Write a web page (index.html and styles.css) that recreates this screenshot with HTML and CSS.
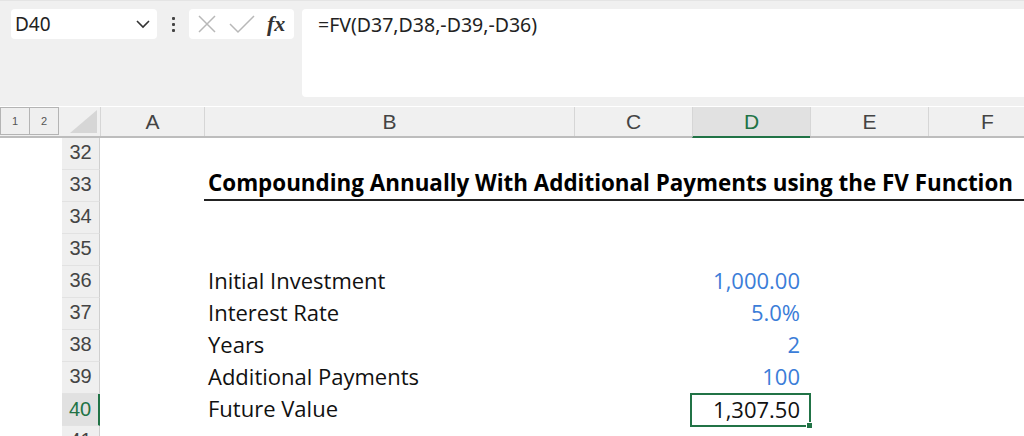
FILE: index.html
```html
<!DOCTYPE html>
<html>
<head>
<meta charset="utf-8">
<link rel="stylesheet" href="styles.css">
</head>
<body>
<div class="toolbar">
  <div class="namebox">
    <span class="name">D40</span>
    <svg class="chev" width="16" height="10" viewBox="0 0 16 10"><path d="M2 2 L8 8 L14 2" fill="none" stroke="#333" stroke-width="1.6"/></svg>
  </div>
  <div class="dots"><span></span><span></span><span></span></div>
  <div class="fxbox">
    <svg class="ico" width="20" height="20" viewBox="0 0 20 20"><path d="M2 2 L18 18 M18 2 L2 18" stroke="#b8b8b8" stroke-width="1.5" fill="none"/></svg>
    <svg class="ico" width="26" height="20" viewBox="0 0 26 20"><path d="M1 10 L9 18 L25 2" stroke="#b8b8b8" stroke-width="1.5" fill="none"/></svg>
    <span class="fx">fx</span>
  </div>
  <div class="formula">=FV(D37,D38,-D39,-D36)</div>
</div>
<div class="sheet">
  <div class="hdr">
    <div class="outline"><span class="obtn">1</span><span class="obtn">2</span></div>
    <div class="corner"><svg width="38" height="29" viewBox="0 0 38 29"><polygon points="35,3 35,26 8,26" fill="#d6d6d6"/></svg></div>
    <div class="col">A</div>
    <div class="col">B</div>
    <div class="col">C</div>
    <div class="col sel">D</div>
    <div class="col">E</div>
    <div class="col last">F</div>
  </div>
  <div class="row"><div class="gut"></div><div class="rh">32</div><div class="cells"></div></div>
  <div class="row"><div class="gut"></div><div class="rh">33</div><div class="cells"><div class="ca"></div><div class="title">Compounding Annually With Additional Payments using the FV Function</div></div></div>
  <div class="row"><div class="gut"></div><div class="rh">34</div><div class="cells"></div></div>
  <div class="row"><div class="gut"></div><div class="rh">35</div><div class="cells"></div></div>
  <div class="row"><div class="gut"></div><div class="rh">36</div><div class="cells"><div class="ca"></div><div class="cb">Initial Investment</div><div class="cc"></div><div class="cd blue">1,000.00</div></div></div>
  <div class="row"><div class="gut"></div><div class="rh">37</div><div class="cells"><div class="ca"></div><div class="cb">Interest Rate</div><div class="cc"></div><div class="cd blue">5.0%</div></div></div>
  <div class="row"><div class="gut"></div><div class="rh">38</div><div class="cells"><div class="ca"></div><div class="cb">Years</div><div class="cc"></div><div class="cd blue">2</div></div></div>
  <div class="row"><div class="gut"></div><div class="rh">39</div><div class="cells"><div class="ca"></div><div class="cb">Additional Payments</div><div class="cc"></div><div class="cd blue">100</div></div></div>
  <div class="row"><div class="gut"></div><div class="rh selr">40</div><div class="cells"><div class="ca"></div><div class="cb">Future Value</div><div class="cc"></div><div class="cd active">1,307.50</div></div></div>
  <div class="row"><div class="gut"></div><div class="rh">41</div><div class="cells"></div></div>
</div>
</body>
</html>
```
FILE: styles.css
```css
html, body {
  margin: 0;
  padding: 0;
  width: 1024px;
  height: 436px;
  overflow: hidden;
  background: #ffffff;
}
body {
  font-family: "Open Sans", "Noto Sans", sans-serif;
}
.toolbar {
  height: 106px;
  box-sizing: border-box;
  background: #f0f0f0;
  border-top: 1px solid #e4e4e4;
  padding: 8px 0 0 11px;
  display: flex;
  align-items: flex-start;
}
.namebox {
  width: 146px;
  height: 30px;
  box-sizing: border-box;
  background: #fff;
  border-radius: 4px;
  display: flex;
  align-items: center;
  justify-content: space-between;
  padding: 0 6px 0 4px;
}
.name {
  font-family: "Noto Sans", sans-serif;
  font-size: 19px;
  color: #222;
}
.dots {
  width: 32px;
  height: 30px;
  display: flex;
  flex-direction: column;
  align-items: center;
  justify-content: center;
  gap: 3px;
}
.dots span {
  width: 3px;
  height: 3px;
  background: #444;
  border-radius: 1px;
}
.fxbox {
  width: 105px;
  height: 30px;
  box-sizing: border-box;
  background: #fff;
  border-radius: 4px;
  display: flex;
  align-items: center;
  padding: 0 0 0 8px;
}
.fxbox .ico { margin-right: 12px; }
.fx {
  font-family: "Liberation Serif", serif;
  font-style: italic;
  font-weight: bold;
  font-size: 22px;
  color: #333;
  line-height: 1;
}
.formula {
  flex: 1;
  margin-left: 8px;
  height: 88px;
  box-sizing: border-box;
  background: #fff;
  border-radius: 4px 0 0 4px;
  padding: 3px 0 0 16px;
  font-family: "Noto Sans", sans-serif;
  font-size: 19.5px;
  color: #222;
  line-height: 26px;
}
.sheet {
  display: flex;
  flex-direction: column;
}
.hdr {
  display: grid;
  grid-template-columns: 62px 38px 104px 370px 118px 118px 118px 118px;
  height: 31px;
  box-sizing: border-box;
  background: #f0f0f0;
  border-bottom: 2px solid #bdbdbd;
  margin-top: 1px;
}
.outline {
  display: flex;
  height: 29px;
}
.obtn {
  width: 29px;
  height: 28px;
  box-sizing: border-box;
  border: 1px solid #b4b4b4;
  border-right: none;
  background: #efefef;
  font-family: "Liberation Sans", sans-serif;
  font-size: 11px;
  color: #555;
  display: flex;
  align-items: center;
  justify-content: center;
}
.obtn + .obtn { border-right: 1px solid #b4b4b4; width: 30px; }
.corner {
  height: 29px;
  overflow: hidden;
}
.corner svg { display: block; }
.col {
  font-family: "Liberation Sans", sans-serif;
  font-size: 21px;
  color: #444;
  display: flex;
  align-items: center;
  justify-content: center;
  border-left: 1px solid #d6d6d6;
  height: 29px;
  box-sizing: border-box;
}
.col.sel {
  color: #217346;
  background: #e1e1e1;
  border-bottom: 2px solid #217346;
  margin-bottom: -2px;
  height: 31px;
}
.row {
  display: flex;
  height: 32px;
}
.gut {
  width: 62px;
  flex: none;
}
.rh {
  width: 38px;
  flex: none;
  box-sizing: border-box;
  background: #efefef;
  border-right: 1px solid #cfcfcf;
  border-bottom: 1px solid #e2e2e2;
  font-family: "Liberation Sans", sans-serif;
  font-size: 20px;
  color: #444;
  display: flex;
  align-items: center;
  justify-content: center;
  padding-bottom: 2px;
}
.rh.selr {
  background: #e1e1e1;
  color: #217346;
  border-right: 2px solid #217346;
  padding-bottom: 0;
}
.cells {
  flex: 1;
  display: flex;
  min-width: 0;
  font-size: 22px;
  color: #111;
}
.ca { width: 104px; flex: none; }
.cb {
  width: 370px;
  flex: none;
  box-sizing: border-box;
  padding: 0 0 5px 4px;
  display: flex;
  align-items: center;
}
.cc { width: 118px; flex: none; }
.cd {
  width: 118px;
  flex: none;
  box-sizing: border-box;
  padding: 0 10px 5px 0;
  display: flex;
  align-items: center;
  justify-content: flex-end;
}
.blue { color: #3b7dd8; }
.title {
  flex: none;
  width: 820px;
  box-sizing: border-box;
  padding: 0 0 5px 4px;
  font-weight: bold;
  font-size: 22.4px;
  white-space: nowrap;
  border-bottom: 2px solid #222;
  height: 31px;
  display: flex;
  align-items: center;
  color: #000;
}
.active {
  position: relative;
  color: #111;
  padding-bottom: 3px;
}
.active::before {
  content: "";
  position: absolute;
  left: -2px;
  top: -1px;
  right: -1px;
  bottom: -1px;
  border: 2px solid #217346;
}
.active::after {
  content: "";
  position: absolute;
  right: -3px;
  bottom: -3px;
  width: 5px;
  height: 5px;
  background: #217346;
  border: 1px solid #fff;
}
```
